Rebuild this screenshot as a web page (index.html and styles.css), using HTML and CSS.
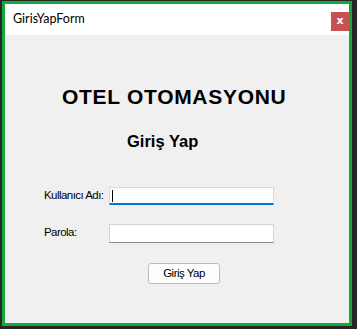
FILE: index.html
```html
<!DOCTYPE html>
<html lang="tr">
<head>
<meta charset="utf-8">
<title>GirisYapForm</title>
<link rel="stylesheet" href="styles.css">
</head>
<body>
<div class="frame">
  <div class="titlebar">
    <div class="title">GirisYapForm</div>
    <div class="close">x</div>
  </div>
  <div class="content">
    <div class="heading">OTEL OTOMASYONU</div>
    <div class="subheading">Giriş Yap</div>
    <div class="row row-first">
      <div class="label">Kullanıcı Adı:</div>
      <div class="field field-focus"><span class="caret"></span></div>
    </div>
    <div class="row row-second">
      <div class="label">Parola:</div>
      <div class="field field-plain"></div>
    </div>
    <div class="button">Giriş Yap</div>
  </div>
</div>
</body>
</html>
```

FILE: styles.css
```css
html, body {
  margin: 0;
  padding: 0;
}

body {
  background: #262626;
  width: 357px;
  height: 329px;
  overflow: hidden;
  font-family: "Liberation Sans", Arial, sans-serif;
}

.frame {
  margin: 1px 0 0 2px;
  width: 344px;
  border: 3px solid #17a83b;
  box-sizing: content-box;
}

.titlebar {
  height: 31px;
  background: #ffffff;
  display: flex;
  justify-content: space-between;
  align-items: flex-start;
}

.title {
  margin: 7px 0 0 8px;
  font-family: "Lato", "Noto Sans", sans-serif;
  font-size: 12.5px;
  line-height: 16px;
  color: #000000;
}

.close {
  margin-top: 8px;
  width: 18px;
  height: 19px;
  background: #c75050;
  color: #ffffff;
  font-family: "DejaVu Sans", sans-serif;
  font-weight: bold;
  font-size: 11px;
  line-height: 18px;
  text-align: center;
}

.content {
  height: 288px;
  background: #f0f0f0;
  padding-top: 49px;
  box-sizing: border-box;
  color: #000000;
}

.heading {
  padding-left: 57px;
  font-size: 21px;
  font-weight: bold;
  line-height: 25px;
  letter-spacing: 0.7px;
  white-space: nowrap;
}

.subheading {
  margin-top: 22px;
  padding-left: 122px;
  font-size: 16.5px;
  font-weight: bold;
  line-height: 20px;
  white-space: nowrap;
}

.row {
  display: flex;
  align-items: flex-start;
  padding-left: 39px;
}

.row-first {
  margin-top: 36px;
}

.row-second {
  margin-top: 19px;
}

.label {
  width: 65px;
  margin-top: 2px;
  font-size: 11.5px;
  line-height: 13px;
  letter-spacing: -0.55px;
  white-space: nowrap;
}

.field {
  width: 165px;
  background: #ffffff;
  box-sizing: border-box;
  position: relative;
}

.field-focus {
  height: 18px;
  border: 1px solid #d9d9d9;
  border-bottom: 2px solid #0078d7;
}

.field-plain {
  height: 19px;
  border: 1px solid #d4d4d4;
  border-bottom: 1px solid #8a8a8a;
}

.caret {
  position: absolute;
  left: 2px;
  top: 2px;
  width: 1px;
  height: 12px;
  background: #000000;
}

.button {
  margin: 20px 0 0 143px;
  width: 72px;
  height: 21px;
  box-sizing: border-box;
  border: 1px solid #bcbcbc;
  border-radius: 3px;
  background: #fdfdfd;
  font-size: 11.5px;
  line-height: 19px;
  letter-spacing: -0.5px;
  text-align: center;
}
```
